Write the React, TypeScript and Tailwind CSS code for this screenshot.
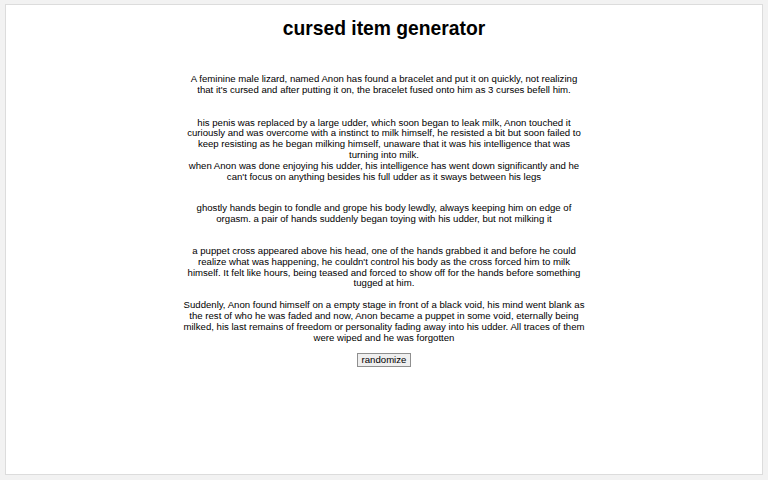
export default function App() {
  return (
    <div className="min-h-[480px] w-full bg-[#f2f2f2] p-[4px_5px_5px_5px]" style={{ fontFamily: '"Liberation Sans", Arial, sans-serif' }}>
      <div className="h-[471px] border border-[#dcdcdc] bg-white text-black">
        <h1 className="mt-[12px] text-center text-[19.3px] font-bold leading-[23px]">cursed item generator</h1>
        <div className="mx-auto mt-[34px] w-[402px] text-center text-[9.6px] leading-[10.8px]">
          <p>
            A feminine male lizard, named Anon has found a bracelet and put it on quickly, not realizing that it's cursed and after putting it on, the bracelet fused onto him as 3 curses befell him.
          </p>
          <p className="mt-[22px]">
            his penis was replaced by a large udder, which soon began to leak milk, Anon touched it curiously and was overcome with a instinct to milk himself, he resisted a bit but soon failed to keep resisting as he began milking himself, unaware that it was his intelligence that was turning into milk.
            <br />
            when Anon was done enjoying his udder, his intelligence has went down significantly and he can't focus on anything besides his full udder as it sways between his legs
          </p>
          <p className="mt-[21px]">
            ghostly hands begin to fondle and grope his body lewdly, always keeping him on edge of orgasm. a pair of hands suddenly began toying with his udder, but not milking it
          </p>
          <p className="mt-[21px]">
            a puppet cross appeared above his head, one of the hands grabbed it and before he could realize what was happening, he couldn't control his body as the cross forced him to milk himself. It felt like hours, being teased and forced to show off for the hands before something tugged at him.
          </p>
          <p className="mt-[11px]">
            Suddenly, Anon found himself on a empty stage in front of a black void, his mind went blank as the rest of who he was faded and now, Anon became a puppet in some void, eternally being milked, his last remains of freedom or personality fading away into his udder. All traces of them were wiped and he was forgotten
          </p>
          <div className="mt-[10px] flex justify-center">
            <button className="h-[14px] border border-[#8f8f8f] bg-[#efefef] px-[4px] text-[9.6px] leading-[12px] text-black">
              randomize
            </button>
          </div>
        </div>
      </div>
    </div>
  );
}
